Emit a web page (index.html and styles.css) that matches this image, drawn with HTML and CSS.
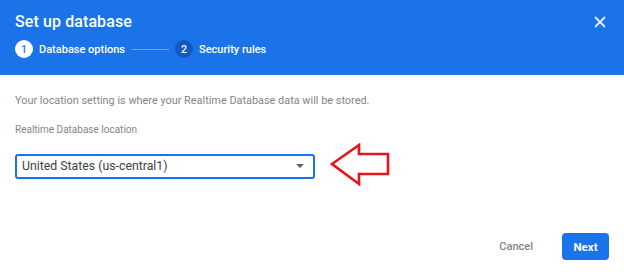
FILE: index.html
```html
<!DOCTYPE html>
<html lang="en">
<head>
    <meta charset="UTF-8">
    <title>Set up database</title>
    <link rel="stylesheet" href="styles.css">
</head>
<body>
    <div class="dialog">
        <!-- Header -->
        <div class="header">
            <div class="title-row">
                <h1>Set up database</h1>
                <svg class="close" width="12" height="12" viewBox="0 0 12 12">
                    <path d="M1 1L11 11M11 1L1 11" stroke="#e3ecfb" stroke-width="1.8" fill="none"/>
                </svg>
            </div>
            <div class="steps">
                <span class="step-num active">1</span>
                <span class="step-label">Database options</span>
                <span class="step-line"></span>
                <span class="step-num">2</span>
                <span class="step-label">Security rules</span>
            </div>
        </div>

        <!-- Content -->
        <div class="content">
            <p class="hint">Your location setting is where your Realtime Database data will be stored.</p>
            <label class="field-label">Realtime Database location</label>
            <div class="select-row">
                <div class="select">
                    <span>United States (us-central1)</span>
                    <span class="caret"></span>
                </div>
                <svg class="arrow" width="60" height="44" viewBox="0 0 60 44">
                    <polygon points="2,21 29,2 29,11 58,11 58,31 29,31 29,41" fill="none" stroke="#e8141c" stroke-width="2.6" stroke-linejoin="miter"/>
                </svg>
            </div>
        </div>

        <!-- Footer -->
        <div class="footer">
            <button class="btn-cancel">Cancel</button>
            <button class="btn-next">Next</button>
        </div>
    </div>
</body>
</html>
```

FILE: styles.css
```css
body {
    margin: 0;
    font-family: Roboto, "Liberation Sans", Arial, sans-serif;
    background-color: #fff;
}
.dialog {
    width: 624px;
    height: 274px;
    display: flex;
    flex-direction: column;
}
.header {
    background-color: #1a73e8;
    height: 75px;
    box-sizing: border-box;
    padding: 10px 18px 0 15px;
    color: #fff;
}
.title-row {
    display: flex;
    justify-content: space-between;
    align-items: center;
    height: 24px;
}
.title-row h1 {
    margin: 0;
    font-size: 16px;
    font-weight: 500;
    line-height: 24px;
    letter-spacing: 0.1px;
}
.close {
    display: block;
}
.steps {
    display: flex;
    align-items: center;
    margin-top: 6px;
    height: 18px;
}
.step-num {
    width: 18px;
    height: 18px;
    border-radius: 50%;
    background-color: #1558c4;
    color: #fff;
    font-size: 10.5px;
    font-weight: 500;
    display: flex;
    align-items: center;
    justify-content: center;
}
.step-num.active {
    background-color: #fff;
    color: #1a73e8;
}
.step-label {
    font-size: 11px;
    font-weight: 500;
    margin-left: 6px;
}
.step-line {
    width: 37px;
    height: 1px;
    background-color: #6da2ef;
    margin: 0 6px 0 7px;
}
.content {
    padding: 18px 15px 0 15px;
}
.hint {
    margin: 0;
    font-size: 10.9px;
    line-height: 16px;
    color: #80868b;
}
.field-label {
    display: block;
    margin-top: 14px;
    font-size: 10px;
    line-height: 14px;
    color: #80868b;
}
.select-row {
    display: flex;
    align-items: center;
    margin-top: 8px;
}
.select {
    width: 300px;
    height: 25px;
    box-sizing: border-box;
    border: 2px solid #1a73e8;
    border-radius: 3px;
    padding: 0 9px 0 5px;
    display: flex;
    align-items: center;
    justify-content: space-between;
    font-size: 12.3px;
    color: #3c4043;
}
.caret {
    width: 0;
    height: 0;
    border-left: 4px solid transparent;
    border-right: 4px solid transparent;
    border-top: 4px solid #5f6368;
}
.arrow {
    margin-left: 15px;
    margin-top: -2px;
}
.footer {
    margin-top: auto;
    display: flex;
    justify-content: flex-end;
    align-items: center;
    padding: 0 15px 14px 0;
}
.btn-cancel {
    background: none;
    border: none;
    font-family: Roboto, sans-serif;
    font-size: 11px;
    font-weight: 500;
    color: #80868b;
    padding: 0;
    margin-right: 29px;
}
.btn-next {
    background-color: #1a73e8;
    border: none;
    border-radius: 4px;
    width: 47px;
    height: 27px;
    color: #fff;
    font-family: Roboto, sans-serif;
    font-size: 11.5px;
    font-weight: 700;
    padding: 0;
}
```
